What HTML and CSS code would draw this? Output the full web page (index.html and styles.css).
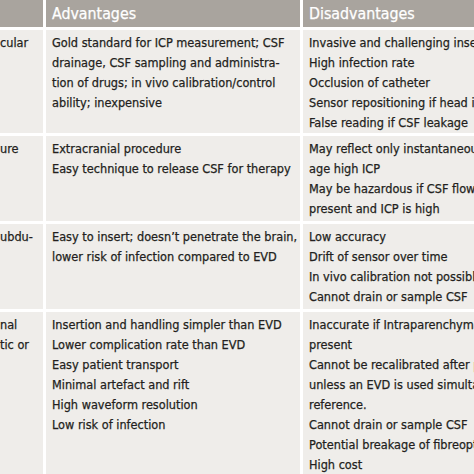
FILE: index.html
```html
<!DOCTYPE html>
<html>
<head>
<meta charset="utf-8">
<link rel="stylesheet" href="styles.css">
</head>
<body>
<div class="table">
  <div class="cell head"></div>
  <div class="cell head">Advantages</div>
  <div class="cell head">Disadvantages</div>

  <div class="cell first">cular</div>
  <div class="cell">Gold standard for ICP measurement; CSF<br>drainage, CSF sampling and administra-<br>tion of drugs; in vivo calibration/control<br>ability; inexpensive</div>
  <div class="cell">Invasive and challenging insertion<br>High infection rate<br>Occlusion of catheter<br>Sensor repositioning if head is moved<br>False reading if CSF leakage</div>

  <div class="cell first">ure</div>
  <div class="cell">Extracranial procedure<br>Easy technique to release CSF for therapy</div>
  <div class="cell">May reflect only instantaneous pressure, not aver-<br>age high ICP<br>May be hazardous if CSF flow obstruction<br>present and ICP is high</div>

  <div class="cell first">ubdu-</div>
  <div class="cell">Easy to insert; doesn’t penetrate the brain,<br>lower risk of infection compared to EVD</div>
  <div class="cell">Low accuracy<br>Drift of sensor over time<br>In vivo calibration not possible<br>Cannot drain or sample CSF</div>

  <div class="cell first">nal<br>tic or</div>
  <div class="cell">Insertion and handling simpler than EVD<br>Lower complication rate than EVD<br>Easy patient transport<br>Minimal artefact and rift<br>High waveform resolution<br>Low risk of infection</div>
  <div class="cell">Inaccurate if Intraparenchymal gradients<br>present<br>Cannot be recalibrated after placement<br>unless an EVD is used simultaneously as a<br>reference.<br>Cannot drain or sample CSF<br>Potential breakage of fibreoptic cable<br>High cost</div>
</div>
</body>
</html>
```

FILE: styles.css
```css
html, body {
  margin: 0;
  padding: 0;
  background: #ffffff;
  width: 474px;
  height: 474px;
  overflow: hidden;
}

.table {
  display: grid;
  grid-template-columns: 43px 254px 1fr;
  grid-template-rows: 27px 103px 85px 85px 1fr;
  gap: 3px;
  width: 474px;
  height: 474px;
  background: #ffffff;
  font-family: "DejaVu Sans Condensed", "DejaVu Sans", sans-serif;
  font-stretch: condensed;
  color: #231f20;
}

.cell {
  background: #efedea;
  padding: 3px 0 0 6px;
  font-size: 12.6px;
  line-height: 20px;
  white-space: nowrap;
  overflow: hidden;
  min-width: 0;
  min-height: 0;
  -webkit-text-stroke: 0.25px currentColor;
}

.cell.first {
  padding-left: 0;
}

.cell.head {
  background: #a9a49e;
  color: #ffffff;
  font-size: 15.8px;
  line-height: 28px;
  padding-top: 0;
}
```
